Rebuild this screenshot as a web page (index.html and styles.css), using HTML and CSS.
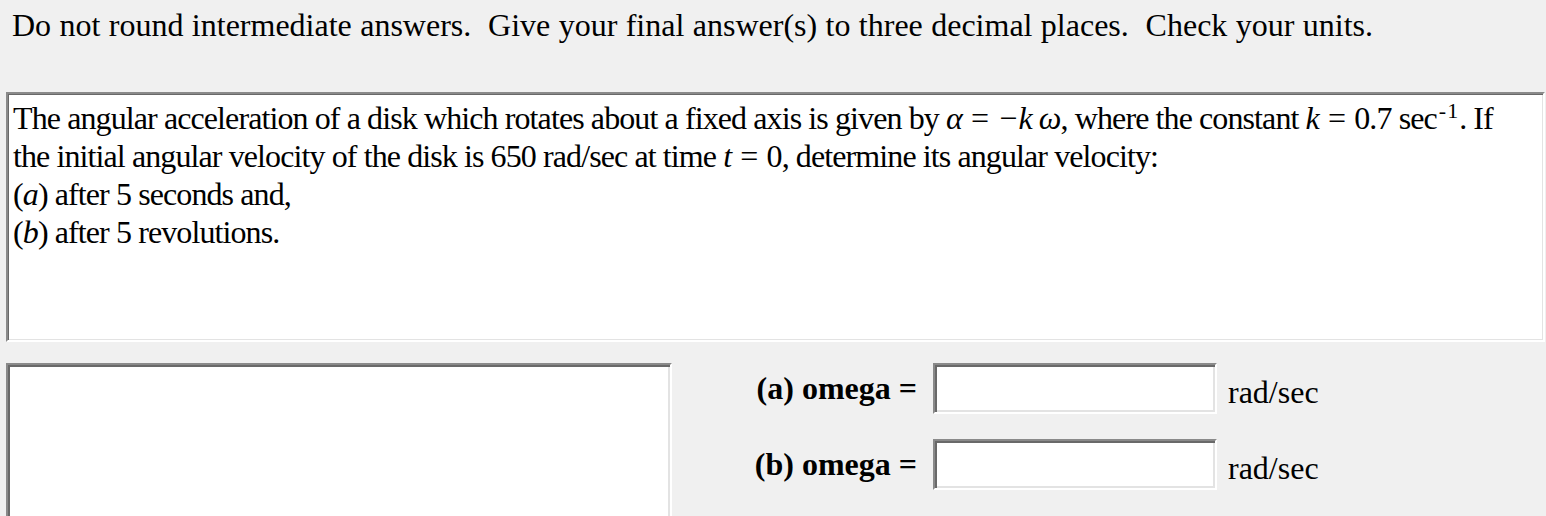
FILE: index.html
```html
<!DOCTYPE html>
<html>
<head>
<meta charset="utf-8">
<link rel="stylesheet" href="styles.css">
</head>
<body>
<div class="page">
  <p class="instructions">Do not round intermediate answers.&nbsp;&nbsp;Give your final answer(s) to three decimal places.&nbsp;&nbsp;Check your units.</p>
  <div class="problem">
    The angular acceleration of a disk which rotates about a fixed axis is given by <i class="m">α</i> <span class="op">=</span> <span class="op">−</span><i class="m">k</i> <i class="m">ω</i>, where the constant <i class="m">k</i> <span class="op">=</span> 0.7 sec<sup>-1</sup>. If the initial angular velocity of the disk is 650 rad/sec at time <i class="m">t</i> <span class="op">=</span> 0, determine its angular velocity:<br>
    (<i class="m">a</i>) after 5 seconds and,<br>
    (<i class="m">b</i>) after 5 revolutions.
  </div>
  <div class="bottom">
    <div class="workbox"></div>
    <div class="answers">
      <div class="label">(a) omega =</div>
      <div class="field"></div>
      <div class="unit">rad/sec</div>
      <div class="label">(b) omega =</div>
      <div class="field"></div>
      <div class="unit">rad/sec</div>
    </div>
  </div>
</div>
</body>
</html>
```

FILE: styles.css
```css
html, body {
  margin: 0;
  padding: 0;
  background: #f0f0f0;
  overflow: hidden;
}

.page {
  font-family: "Liberation Serif", "Times New Roman", serif;
  font-size: 32px;
  line-height: 38px;
  color: #000;
}

.instructions {
  margin: 0;
  padding: 6px 0 0 12px;
  height: 92px;
  box-sizing: border-box;
  white-space: nowrap;
  word-spacing: 0.4px;
}

.problem {
  margin-left: 6px;
  width: 1539px;
  height: 250px;
  box-sizing: border-box;
  background: #fff;
  border-style: solid;
  border-width: 2px;
  border-color: #8a8a8a #ffffff #ffffff #8a8a8a;
  box-shadow: inset 1px 1px 0 #696969, inset -1px -1px 0 #e3e3e3;
  padding: 5px 30px 0 5px;
  letter-spacing: -0.9px;
}

.m {
  font-style: italic;
}

.op {
  padding: 0 2px;
}

sup {
  font-size: 22px;
  line-height: 0;
  vertical-align: 0;
  position: relative;
  top: -11px;
  letter-spacing: 1px;
  padding-left: 2px;
}

.bottom {
  display: flex;
  align-items: flex-start;
  margin-top: 21px;
  margin-left: 6px;
}

.workbox {
  width: 666px;
  height: 220px;
  box-sizing: border-box;
  background: #fff;
  border-style: solid;
  border-width: 2px;
  border-color: #8a8a8a #ffffff #ffffff #8a8a8a;
  box-shadow: inset 2px 2px 0 #696969, inset -2px -2px 0 #e3e3e3;
}

.answers {
  display: grid;
  grid-template-columns: 261px 284px auto;
  grid-auto-rows: 76px;
  column-gap: 0;
  align-items: start;
}

.label {
  font-weight: bold;
  text-align: right;
  padding-top: 6px;
  padding-right: 16px;
}

.field {
  height: 51px;
  box-sizing: border-box;
  background: #fff;
  border-style: solid;
  border-width: 2px;
  border-color: #8a8a8a #ffffff #ffffff #8a8a8a;
  box-shadow: inset 2px 2px 0 #696969, inset -2px -2px 0 #e3e3e3;
}

.unit {
  padding-top: 10px;
  padding-left: 11px;
}
```
